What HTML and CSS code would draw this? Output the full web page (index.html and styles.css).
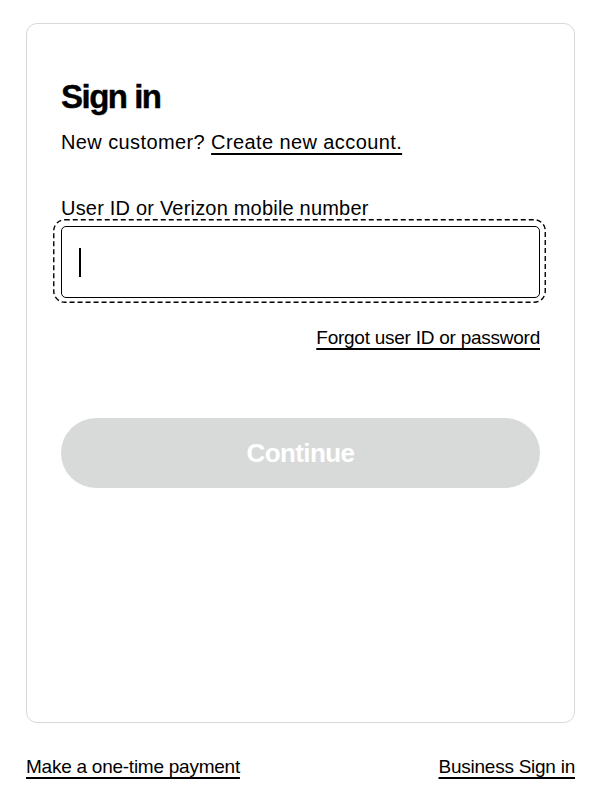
FILE: index.html
```html
<!DOCTYPE html>
<html lang="en">
<head>
<meta charset="utf-8">
<title>Sign in</title>
<link rel="stylesheet" href="styles.css">
</head>
<body>
<div class="page">
  <main class="card">
    <h1 class="title">Sign in</h1>
    <p class="subtitle">New customer? <a class="link" href="#">Create new account.</a></p>
    <label class="label" for="userid">User ID or Verizon mobile number</label>
    <div class="field">
      <svg class="focus-ring" aria-hidden="true"><rect class="focus-rect" rx="11" ry="11"></rect></svg>
      <span class="caret"></span>
      <input class="input" id="userid" type="text" aria-label="User ID or Verizon mobile number">
    </div>
    <div class="forgot-row">
      <a class="link tight" href="#">Forgot user ID or password</a>
    </div>
    <button class="continue" type="button" disabled>Continue</button>
  </main>
  <footer class="footer">
    <a class="link tight" href="#">Make a one-time payment</a>
    <a class="link tight" href="#">Business Sign in</a>
  </footer>
</div>
</body>
</html>
```

FILE: styles.css
```css
* {
  box-sizing: border-box;
}

html, body {
  margin: 0;
  padding: 0;
  background: #ffffff;
}

body {
  font-family: "Liberation Sans", Arial, Helvetica, sans-serif;
  color: #000000;
}

.page {
  padding: 23px 25px 0 26px;
}

.card {
  height: 700px;
  border: 1px solid #d8dada;
  border-radius: 11px;
  padding: 54px 34px 0 34px;
  display: flex;
  flex-direction: column;
}

.title {
  margin: 0;
  font-size: 33px;
  line-height: 38px;
  font-weight: 700;
  letter-spacing: -1.5px;
  -webkit-text-stroke: 0.4px #000000;
}

.subtitle {
  margin: 14px 0 0 0;
  font-size: 20px;
  line-height: 24px;
  letter-spacing: 0.4px;
}

.link {
  color: #000000;
  text-decoration: underline;
  text-decoration-thickness: 1.5px;
  text-underline-offset: 4px;
}

.label {
  display: block;
  margin-top: 42px;
  font-size: 20px;
  line-height: 24px;
  letter-spacing: 0.2px;
}

.field {
  position: relative;
  margin-top: 6px;
  height: 72px;
  border: 1px solid #000000;
  border-radius: 5px;
  display: flex;
  align-items: center;
  padding-left: 17px;
}

.focus-ring {
  position: absolute;
  top: -8px;
  left: -9px;
  width: calc(100% + 16px);
  height: calc(100% + 14px);
  overflow: visible;
  pointer-events: none;
}

.focus-rect {
  x: 0.75px;
  y: 0.75px;
  width: calc(100% - 1.5px);
  height: calc(100% - 1.5px);
  fill: none;
  stroke: #000000;
  stroke-width: 1.4px;
  stroke-dasharray: 5 3;
}

.caret {
  width: 2px;
  height: 29px;
  background: #000000;
  flex: none;
}

.input {
  flex: 1;
  min-width: 0;
  height: 100%;
  border: none;
  outline: none;
  background: transparent;
  font-family: inherit;
  font-size: 20px;
  padding: 0;
}

.forgot-row {
  margin-top: 28px;
  display: flex;
  justify-content: flex-end;
  font-size: 19px;
  line-height: 24px;
}

.tight {
  letter-spacing: -0.25px;
}

.continue {
  margin-top: 68px;
  height: 70px;
  width: 100%;
  border: none;
  border-radius: 35px;
  background: #d8dada;
  color: #ffffff;
  font-family: inherit;
  font-size: 26px;
  font-weight: 700;
  letter-spacing: -0.6px;
  display: flex;
  align-items: center;
  justify-content: center;
  padding: 0;
}

.footer {
  margin-top: 32px;
  display: flex;
  justify-content: space-between;
  font-size: 19px;
  line-height: 24px;
}
```
